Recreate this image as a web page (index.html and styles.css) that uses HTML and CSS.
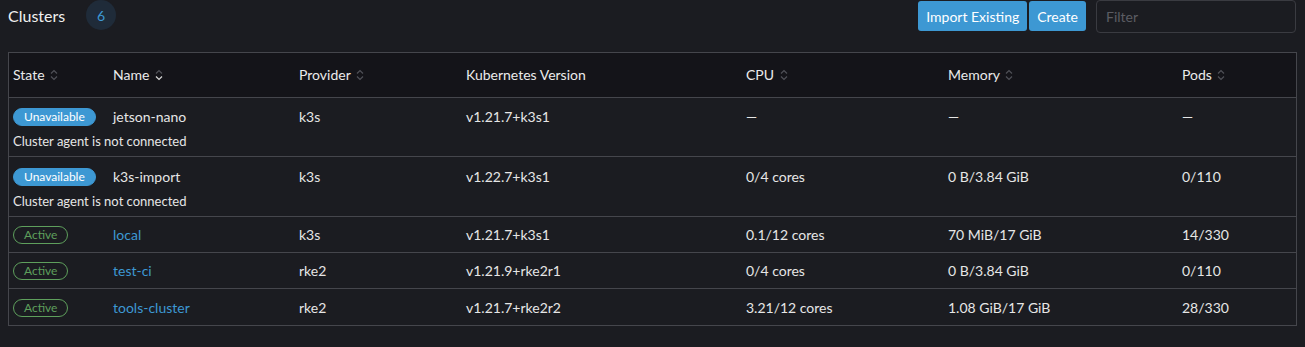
FILE: index.html
```html
<!DOCTYPE html>
<html>
<head>
<meta charset="utf-8">
<link rel="stylesheet" href="styles.css">
</head>
<body>
<div class="page">
  <header class="titlebar">
    <div class="title">
      <h1>Clusters</h1>
      <span class="count">6</span>
    </div>
    <div class="actions">
      <button class="btn">Import Existing</button>
      <button class="btn">Create</button>
      <input class="filter" type="text" placeholder="Filter">
    </div>
  </header>

  <table class="grid">
    <colgroup>
      <col class="c-state"><col class="c-name"><col class="c-prov"><col class="c-ver"><col class="c-cpu"><col class="c-mem"><col class="c-pods">
    </colgroup>
    <thead>
      <tr>
        <th>State <svg class="sort" viewBox="0 0 8 12"><path class="up" d="M1 4.5 L4 1.5 L7 4.5"/><path class="dn" d="M1 7.5 L4 10.5 L7 7.5"/></svg></th>
        <th>Name <svg class="sort active" viewBox="0 0 8 12"><path class="up" d="M1 4.5 L4 1.5 L7 4.5"/><path class="dn" d="M1 7.5 L4 10.5 L7 7.5"/></svg></th>
        <th>Provider <svg class="sort" viewBox="0 0 8 12"><path class="up" d="M1 4.5 L4 1.5 L7 4.5"/><path class="dn" d="M1 7.5 L4 10.5 L7 7.5"/></svg></th>
        <th>Kubernetes Version</th>
        <th>CPU <svg class="sort" viewBox="0 0 8 12"><path class="up" d="M1 4.5 L4 1.5 L7 4.5"/><path class="dn" d="M1 7.5 L4 10.5 L7 7.5"/></svg></th>
        <th>Memory <svg class="sort" viewBox="0 0 8 12"><path class="up" d="M1 4.5 L4 1.5 L7 4.5"/><path class="dn" d="M1 7.5 L4 10.5 L7 7.5"/></svg></th>
        <th>Pods <svg class="sort" viewBox="0 0 8 12"><path class="up" d="M1 4.5 L4 1.5 L7 4.5"/><path class="dn" d="M1 7.5 L4 10.5 L7 7.5"/></svg></th>
      </tr>
    </thead>
    <tbody>
      <tr class="main has-sub">
        <td><span class="badge unavailable">Unavailable</span></td>
        <td>jetson-nano</td>
        <td>k3s</td>
        <td>v1.21.7+k3s1</td>
        <td>—</td>
        <td>—</td>
        <td>—</td>
      </tr>
      <tr class="sub">
        <td colspan="7">Cluster agent is not connected</td>
      </tr>
      <tr class="main has-sub">
        <td><span class="badge unavailable">Unavailable</span></td>
        <td>k3s-import</td>
        <td>k3s</td>
        <td>v1.22.7+k3s1</td>
        <td>0/4 cores</td>
        <td>0 B/3.84 GiB</td>
        <td>0/110</td>
      </tr>
      <tr class="sub">
        <td colspan="7">Cluster agent is not connected</td>
      </tr>
      <tr class="main">
        <td><span class="badge active">Active</span></td>
        <td><a class="link">local</a></td>
        <td>k3s</td>
        <td>v1.21.7+k3s1</td>
        <td>0.1/12 cores</td>
        <td>70 MiB/17 GiB</td>
        <td>14/330</td>
      </tr>
      <tr class="main">
        <td><span class="badge active">Active</span></td>
        <td><a class="link">test-ci</a></td>
        <td>rke2</td>
        <td>v1.21.9+rke2r1</td>
        <td>0/4 cores</td>
        <td>0 B/3.84 GiB</td>
        <td>0/110</td>
      </tr>
      <tr class="main">
        <td><span class="badge active">Active</span></td>
        <td><a class="link">tools-cluster</a></td>
        <td>rke2</td>
        <td>v1.21.7+rke2r2</td>
        <td>3.21/12 cores</td>
        <td>1.08 GiB/17 GiB</td>
        <td>28/330</td>
      </tr>
    </tbody>
  </table>
</div>
</body>
</html>
```

FILE: styles.css
```css
* { box-sizing: border-box; }

html, body {
  margin: 0;
  padding: 0;
  background: #1b1c21;
}

body {
  font-family: Lato, "Open Sans", "Liberation Sans", sans-serif;
  color: #e6e6e6;
  font-size: 14px;
}

.page {
  padding: 0 8px;
}

.titlebar {
  display: flex;
  justify-content: space-between;
  align-items: flex-start;
  height: 33px;
  margin-bottom: 19px;
}

.title {
  display: flex;
  align-items: center;
  gap: 21px;
  height: 30px;
}

.title h1 {
  margin: 0;
  font-size: 16px;
  font-weight: 400;
  color: #f0f0f0;
}

.count {
  width: 30px;
  height: 30px;
  border-radius: 50%;
  background: #1f2b39;
  color: #3d98d3;
  display: flex;
  align-items: center;
  justify-content: center;
  font-size: 14px;
}

.actions {
  display: flex;
  align-items: flex-start;
  margin-right: 1px;
}

.btn {
  height: 30px;
  margin-top: 1px;
  margin-right: 2px;
  padding: 0 8px;
  border: none;
  border-radius: 3px;
  background: #3d98d3;
  color: #ffffff;
  font-family: inherit;
  font-size: 14px;
}

.btn + .btn {
  margin-right: 10px;
}

.filter {
  width: 200px;
  height: 33px;
  padding: 0 9px;
  border: 1px solid #3a3b41;
  border-radius: 4px;
  background: #1b1c21;
  color: #e6e6e6;
  font-family: inherit;
  font-size: 14px;
}

.filter::placeholder {
  color: #5b5c63;
}

.grid {
  width: 100%;
  table-layout: fixed;
  border-collapse: separate;
  border-spacing: 0;
  border: 1px solid #45464c;
}

.c-state { width: 100px; }
.c-name { width: 186px; }
.c-prov { width: 167px; }
.c-ver { width: 280px; }
.c-cpu { width: 202px; }
.c-mem { width: 234px; }
.c-pods { width: 118px; }

.grid th {
  background: #141419;
  text-align: left;
  font-weight: 400;
  padding: 13px 4px;
  height: 44px;
  line-height: 18px;
  border-bottom: 1px solid #45464c;
  color: #ebebeb;
  white-space: nowrap;
}

.sort {
  width: 8px;
  height: 12px;
  margin-left: 2px;
  vertical-align: -1px;
  fill: none;
  stroke: #4f5057;
  stroke-width: 1.2;
}

.sort.active .dn {
  stroke: #d8d8d8;
}

.grid td {
  padding: 9px 4px 8px;
  height: 36px;
  line-height: 18px;
  border-bottom: 1px solid #45464c;
  vertical-align: middle;
  white-space: nowrap;
}

.grid tbody tr:last-child td {
  border-bottom: none;
  height: 36px;
}

.grid tr.has-sub td {
  padding: 10px 4px 4px;
  height: 32px;
  border-bottom: none;
}

.grid tr.sub td {
  padding: 2px 4px 6px;
  height: 27px;
  font-size: 13px;
  line-height: 18px;
}

.grid tr.sub + tr.has-sub td {
  padding-top: 11px;
  height: 33px;
}

.badge {
  display: inline-block;
  height: 18px;
  line-height: 16px;
  padding: 0 10px;
  border-radius: 9px;
  font-size: 12px;
  border: 1px solid transparent;
  vertical-align: top;
}

.badge.unavailable {
  background: #3d98d3;
  border-color: #3d98d3;
  color: #ffffff;
}

.badge.active {
  color: #5e9f5c;
  border-color: #5e9f5c;
}

.link {
  color: #3d98d3;
  text-decoration: none;
}
```
